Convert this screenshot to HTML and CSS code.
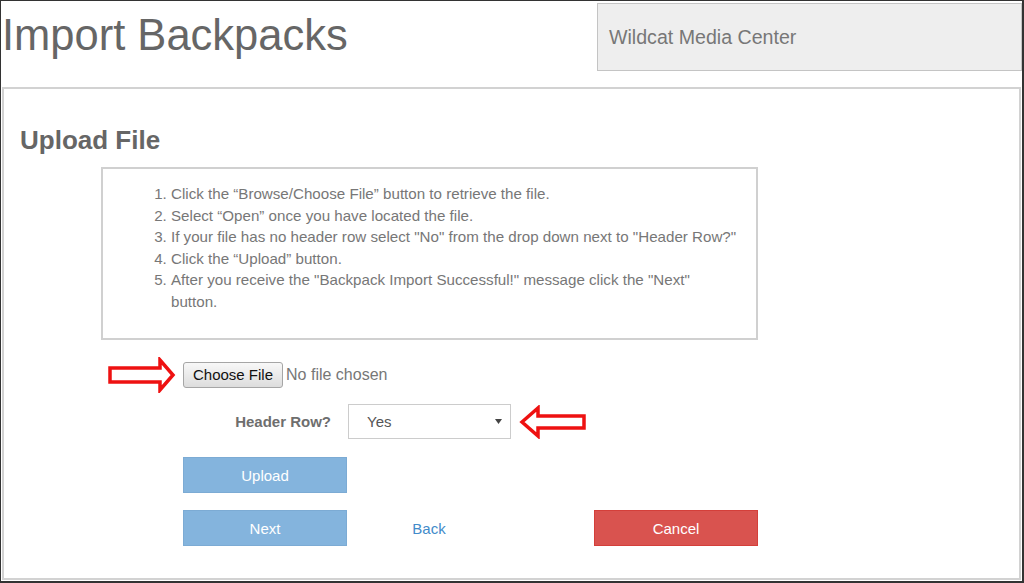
FILE: index.html
```html
<!DOCTYPE html>
<html lang="en">
<head>
  <meta charset="UTF-8" />
  <meta name="viewport" content="width=device-width, initial-scale=1.0"/>
  <title>Import Backpacks - Wildcat Media Center</title>
  <link rel="stylesheet" href="styles.css">
</head>
<body>

  <div class="frame">
    <header class="top">
      <h1 class="page-title">Import Backpacks</h1>
      <div class="site-name">Wildcat Media Center</div>
    </header>

    <main class="panel">
      <h2 class="panel-title">Upload File</h2>

      <div class="steps">
        <ol>
          <li>Click the “Browse/Choose File” button to retrieve the file.</li>
          <li>Select “Open” once you have located the file.</li>
          <li>If your file has no header row select "No" from the drop down next to "Header Row?"</li>
          <li>Click the “Upload” button.</li>
          <li>After you receive the "Backpack Import Successful!" message click the "Next" button.</li>
        </ol>
      </div>

      <form class="upload-form" onsubmit="return false;">
        <div class="row file-row">
          <svg class="arrow" width="68" height="36" viewBox="0 0 68 36">
            <path d="M2,11 H52 V3 L65,18 L52,33 V25 H2 Z" />
          </svg>
          <label class="file-btn">Choose File<input type="file" id="backpackFile" hidden /></label>
          <span class="file-name">No file chosen</span>
        </div>

        <div class="row header-row">
          <label class="field-label" for="headerRow">Header Row?</label>
          <div class="select-wrap">
            <select id="headerRow">
              <option value="yes">Yes</option>
              <option value="no">No</option>
            </select>
            <svg class="caret" width="7" height="5" viewBox="0 0 7 5">
              <path d="M0,0 H7 L3.5,5 Z" />
            </svg>
          </div>
          <svg class="arrow" width="68" height="34" viewBox="0 0 68 34">
            <path d="M3,17 L19,3 V11 H65 V23 H19 V31 Z" />
          </svg>
        </div>

        <div class="row">
          <button class="btn btn-primary" disabled>Upload</button>
        </div>

        <div class="row actions">
          <button class="btn btn-primary" disabled>Next</button>
          <a href="#" class="back">Back</a>
          <button class="btn btn-danger">Cancel</button>
        </div>
      </form>
    </main>
  </div>

</body>
</html>
```

FILE: styles.css
```css
* {
  box-sizing: border-box;
}
body {
  margin: 0;
  font-family: "Liberation Sans", Arial, sans-serif;
  background: white;
}
.frame {
  width: 1024px;
  height: 583px;
  border: solid #333;
  border-width: 1px 2px 2px 1px;
  display: flex;
  flex-direction: column;
}
.top {
  display: flex;
  align-items: flex-start;
  height: 86px;
  padding-top: 2px;
}
.page-title {
  margin: 11px 0 0 1px;
  font-size: 43.5px;
  line-height: 43px;
  font-weight: normal;
  color: #666;
}
.site-name {
  margin-left: auto;
  width: 425px;
  height: 68px;
  display: flex;
  align-items: center;
  padding-left: 11px;
  background: #eee;
  border: 1px solid #c4c4c4;
  font-size: 19.6px;
  color: #777;
}
.panel {
  flex: 1;
  margin: 0 1px 1px;
  border: 2px solid #d2d2d2;
  padding: 37px 0 0 14px;
}
.panel-title {
  margin: 0 0 0 2px;
  font-size: 26px;
  line-height: 28px;
  font-weight: bold;
  color: #666;
}
.steps {
  margin: 13px 0 0 83px;
  width: 657px;
  height: 173px;
  border: 2px solid #d0d0d0;
  padding: 14px 0 0 28px;
}
.steps ol {
  margin: 0;
  padding-left: 40px;
  width: 607px;
  font-size: 15.15px;
  line-height: 21.6px;
  color: #777;
}
.upload-form {
  margin: 17px 0 0 90px;
  width: 650px;
}
.row {
  display: flex;
  align-items: center;
}
.arrow path {
  fill: white;
  stroke: #ee1111;
  stroke-width: 3.5;
}
.file-row {
  height: 36px;
}
.file-btn {
  margin-left: 7px;
  height: 26px;
  line-height: 24px;
  padding: 0 9px;
  border: 1px solid #a6a6a6;
  border-radius: 3px;
  background: linear-gradient(#f8f8f8, #dddddd);
  font-size: 15px;
  color: #111;
  cursor: pointer;
}
.file-name {
  margin-left: 3px;
  font-size: 16px;
  color: #777;
}
.header-row {
  margin-top: 11px;
  height: 35px;
}
.field-label {
  width: 223px;
  text-align: right;
  font-size: 15px;
  font-weight: bold;
  color: #6e6e6e;
}
.select-wrap {
  position: relative;
  margin-left: 17px;
  width: 163px;
  height: 35px;
}
.select-wrap select {
  width: 100%;
  height: 100%;
  padding-left: 18px;
  border: 1px solid #ccc;
  border-radius: 0;
  background: white;
  font-family: inherit;
  font-size: 15px;
  color: #555;
  -webkit-appearance: none;
  appearance: none;
}
.caret {
  position: absolute;
  right: 9px;
  top: 15px;
  pointer-events: none;
}
.caret path {
  fill: #444;
}
.header-row .arrow {
  margin-left: 8px;
}
.btn {
  width: 164px;
  height: 36px;
  border: 1px solid;
  font-family: inherit;
  font-size: 15px;
  color: white;
  cursor: pointer;
}
.btn-primary {
  background-color: #84b4dd;
  border-color: #7cabd4;
}
.btn-primary:disabled {
  cursor: default;
}
.btn-danger {
  background-color: #d9534f;
  border-color: #d43f3a;
}
.btn-danger:hover {
  background-color: #c9302c;
}
.upload-form .row:nth-child(3) {
  margin-top: 18px;
}
.upload-form .row:nth-child(3) .btn,
.actions .btn-primary {
  margin-left: 75px;
}
.actions {
  margin-top: 17px;
}
a.back {
  width: 164px;
  text-align: center;
  font-size: 15px;
  color: #428bca;
  text-decoration: none;
}
.actions .btn-danger {
  margin-left: auto;
}
```
